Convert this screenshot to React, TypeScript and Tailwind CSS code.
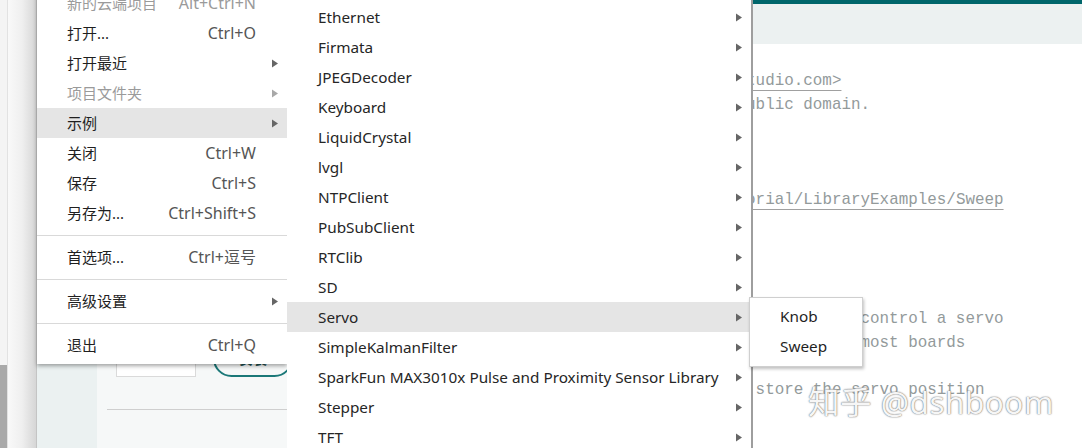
import React from "react";

const FONT = { fontFamily: '"Noto Sans", "Noto Sans CJK SC", sans-serif' };

function Arrow({ light }: { light?: boolean }) {
  return (
    <svg width="6" height="9" viewBox="0 0 6 9" className="shrink-0">
      <path d="M0 0.5 L6 4.5 L0 8.5 Z" fill={light ? "#a8a8a8" : "#666666"} />
    </svg>
  );
}

type Item =
  | { sep: true }
  | { label: string; shortcut?: string; sub?: boolean; disabled?: boolean; active?: boolean };

const fileMenu: Item[] = [
  { label: "新的云端项目", shortcut: "Alt+Ctrl+N", disabled: true },
  { label: "打开...", shortcut: "Ctrl+O" },
  { label: "打开最近", sub: true },
  { label: "项目文件夹", sub: true, disabled: true },
  { label: "示例", sub: true, active: true },
  { label: "关闭", shortcut: "Ctrl+W" },
  { label: "保存", shortcut: "Ctrl+S" },
  { label: "另存为...", shortcut: "Ctrl+Shift+S" },
  { sep: true },
  { label: "首选项...", shortcut: "Ctrl+逗号" },
  { sep: true },
  { label: "高级设置", sub: true },
  { sep: true },
  { label: "退出", shortcut: "Ctrl+Q" },
];

const libs = [
  "Ethernet",
  "Firmata",
  "JPEGDecoder",
  "Keyboard",
  "LiquidCrystal",
  "lvgl",
  "NTPClient",
  "PubSubClient",
  "RTClib",
  "SD",
  "Servo",
  "SimpleKalmanFilter",
  "SparkFun MAX3010x Pulse and Proximity Sensor Library",
  "Stepper",
  "TFT",
  "WiFi",
];

const code: { text: string; link?: [number, number] }[] = [
  { text: "/* Sweep" },
  { text: " by BARRAGAN <http://barraganstudio.com>", link: [13, 40] },
  { text: " This example code is in the public domain." },
  { text: "" },
  { text: " modified 8 Nov 2013" },
  { text: " by Scott Fitzgerald" },
  { text: " https://www.arduino.cc/en/Tutorial/LibraryExamples/Sweep", link: [1, 57] },
  { text: "*/" },
  { text: "" },
  { text: "#include <Servo.h>" },
  { text: "" },
  { text: "Servo myservo;  // create servo object to control a servo" },
  { text: "// twelve servo objects can be created on most boards" },
  { text: "" },
  { text: "int pos = 0;    // variable to store the servo position" },
  { text: "" },
];

export default function App() {
  return (
    <div className="relative w-[1082px] h-[448px] overflow-hidden bg-white" style={FONT}>
      {/* Background window */}
      <div className="flex h-full">
        <div className="w-[8px] h-full flex flex-col border-r border-[#e2e2e2]">
          <div className="h-[365px] bg-[#f4f4f4]" />
          <div className="flex-1 bg-[#a9a9a9]" />
        </div>
        <div className="w-[29px] h-full bg-gradient-to-r from-[#f9f9f9] via-[#efefef] to-[#d6d6d6] border-r border-[#c4c4c4]" />
        {/* sidebar */}
        <div className="w-[60px] h-full bg-[#ebf1f1]" />
        {/* library panel */}
        <div className="w-[303px] h-full bg-[#f6f8f8] flex flex-col">
          <div className="flex mt-[340px] items-start">
            <div className="ml-[19px] w-[80px] h-[37px] bg-white border border-[#dadada] text-[14px] text-[#333] pl-[10px] pt-[11px] leading-none">
              1.2.1
            </div>
            <div className="ml-[17px] w-[80px] h-[37px] rounded-full border-2 border-[#1b7878] text-[14px] font-bold text-[#1b4d4d] flex items-start justify-center pt-[6px]">
              安装
            </div>
          </div>
          <div className="ml-[10px] mt-[32px] h-px bg-[#cfcfcf]" />
        </div>
        {/* editor */}
        <div className="flex-1 h-full flex flex-col">
          <div className="h-[4px] bg-[#00666b]" />
          <div className="h-[40px] bg-[#ecf1f1]" />
          <div
            className="pl-[60px] pt-[2px] text-[15.9px] leading-[23.8px] text-[#939a9b] whitespace-pre"
            style={{ fontFamily: '"Liberation Mono", monospace' }}
          >
            {code.map((l, i) => (
              <div key={i} className="h-[23.8px]">
                {l.link ? (
                  <>
                    {l.text.slice(0, l.link[0])}
                    <span className="underline decoration-[#a0a0a0] underline-offset-[5px]">
                      {l.text.slice(l.link[0], l.link[1])}
                    </span>
                    {l.text.slice(l.link[1])}
                  </>
                ) : (
                  l.text || " "
                )}
              </div>
            ))}
          </div>
        </div>
      </div>

      {/* Watermark */}
      <div
        className="absolute left-[808px] top-[382px] text-[31.5px] leading-[40px] text-[#f6f6f6] tracking-[0.5px] [text-shadow:0_0_1px_#666,0_0_2px_#999]"
        style={{ fontFamily: '"Noto Sans", "Noto Sans CJK SC", sans-serif' }}
      >
        知乎 @dshboom
      </div>

      {/* File menu */}
      <div className="absolute left-[37px] top-[-12px] w-[250px] bg-white shadow-[0_2px_4px_rgba(0,0,0,0.35)] pb-[4px]">
        {fileMenu.map((it, i) =>
          "sep" in it ? (
            <div key={i} className="h-[14px] flex items-center">
              <div className="w-full h-px bg-[#d9d9d9]" />
            </div>
          ) : (
            <div
              key={i}
              className={`h-[30px] flex items-center pl-[30px] pr-[9px] text-[15px] ${
                it.active ? "bg-[#e5e5e5]" : ""
              }`}
            >
              <span className={`flex-1 ${it.disabled ? "text-[#9a9a9a]" : "text-[#1f1f1f]"}`}>{it.label}</span>
              {it.shortcut && (
                <span className={`mr-[16px] text-[16px] ${it.disabled ? "text-[#9a9a9a]" : "text-[#555555]"}`}>
                  {it.shortcut}
                </span>
              )}
              {it.sub ? <Arrow light={it.disabled} /> : <span className="w-[6px]" />}
            </div>
          )
        )}
      </div>

      {/* Examples submenu */}
      <div className="absolute left-[287px] top-[-2px] w-[466px] bg-white pt-[4px] border-r-2 border-[#9e9e9e]">
        {libs.map((l) => (
          <div
            key={l}
            className={`h-[30px] flex items-center pl-[31px] pr-[9px] text-[15.3px] text-[#262626] ${
              l === "Servo" ? "bg-[#e5e5e5]" : ""
            }`}
          >
            <span className="flex-1 whitespace-nowrap">{l}</span>
            <Arrow />
          </div>
        ))}
      </div>

      {/* Servo submenu */}
      <div className="absolute left-[749px] top-[297px] w-[114px] h-[70px] bg-white border border-[#cfcfcf] shadow-[1px_2px_3px_rgba(0,0,0,0.25)] pt-[3px]">
        {["Knob", "Sweep"].map((s) => (
          <div key={s} className="h-[30px] flex items-center pl-[30px] text-[15.3px] text-[#1f1f1f]">
            {s}
          </div>
        ))}
      </div>
    </div>
  );
}
